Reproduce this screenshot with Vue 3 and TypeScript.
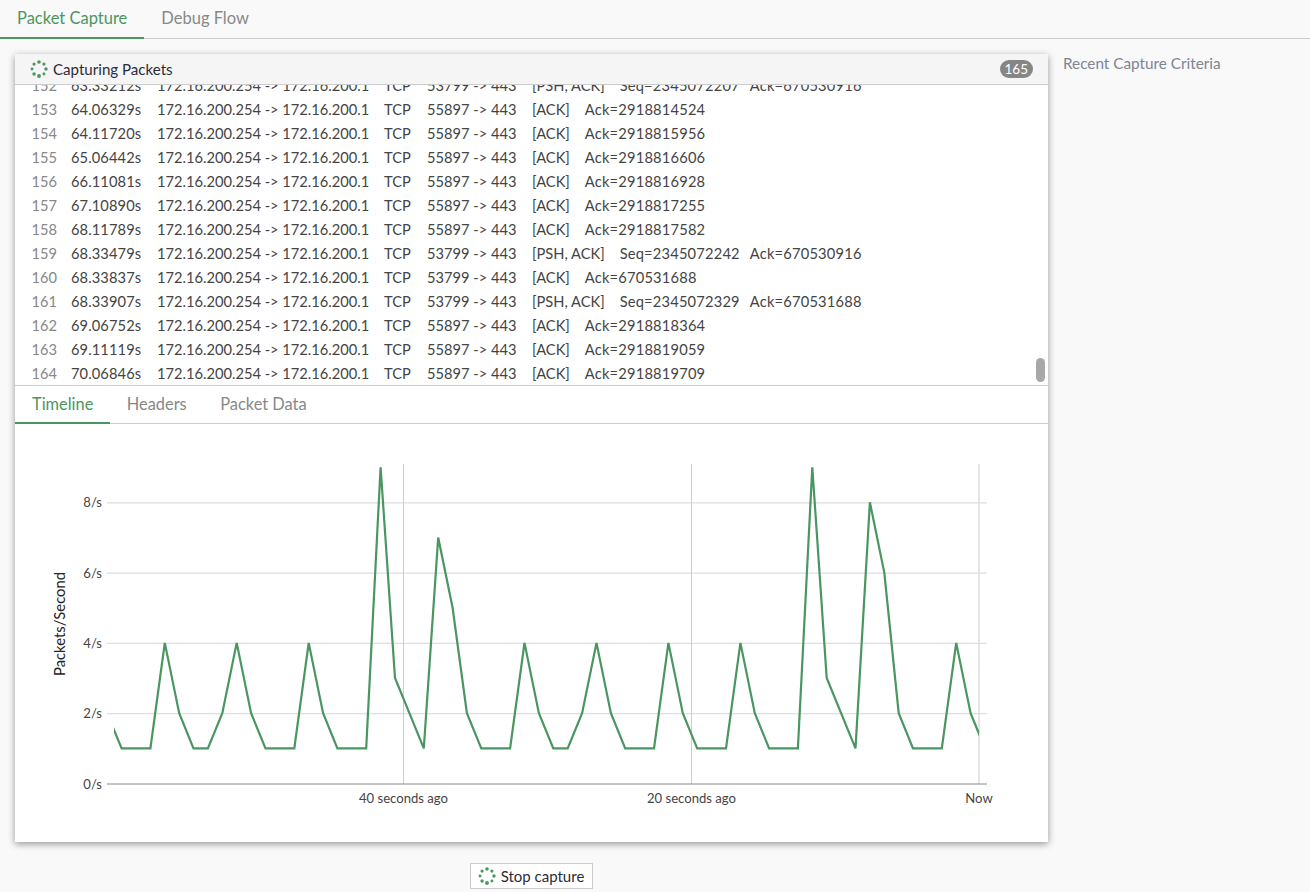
<script setup lang="ts">
interface Row { n: number; t: string; s: number; flags: string; info: string[] }

const rows: Row[] = [
  { n: 152, t: '63.33212s', s: 53799, flags: '[PSH, ACK]', info: ['Seq=2345072207', 'Ack=670530916'] },
  { n: 153, t: '64.06329s', s: 55897, flags: '[ACK]', info: ['Ack=2918814524'] },
  { n: 154, t: '64.11720s', s: 55897, flags: '[ACK]', info: ['Ack=2918815956'] },
  { n: 155, t: '65.06442s', s: 55897, flags: '[ACK]', info: ['Ack=2918816606'] },
  { n: 156, t: '66.11081s', s: 55897, flags: '[ACK]', info: ['Ack=2918816928'] },
  { n: 157, t: '67.10890s', s: 55897, flags: '[ACK]', info: ['Ack=2918817255'] },
  { n: 158, t: '68.11789s', s: 55897, flags: '[ACK]', info: ['Ack=2918817582'] },
  { n: 159, t: '68.33479s', s: 53799, flags: '[PSH, ACK]', info: ['Seq=2345072242', 'Ack=670530916'] },
  { n: 160, t: '68.33837s', s: 53799, flags: '[ACK]', info: ['Ack=670531688'] },
  { n: 161, t: '68.33907s', s: 53799, flags: '[PSH, ACK]', info: ['Seq=2345072329', 'Ack=670531688'] },
  { n: 162, t: '69.06752s', s: 55897, flags: '[ACK]', info: ['Ack=2918818364'] },
  { n: 163, t: '69.11119s', s: 55897, flags: '[ACK]', info: ['Ack=2918819059'] },
  { n: 164, t: '70.06846s', s: 55897, flags: '[ACK]', info: ['Ack=2918819709'] },
]

const values = [2, 1, 1, 1, 4, 2, 1, 1, 2, 4, 2, 1, 1, 1, 4, 2, 1, 1, 1, 9, 3, 2, 1, 7, 5, 2, 1, 1, 1, 4, 2, 1, 1, 2, 4, 2, 1, 1, 1, 4, 2, 1, 1, 1, 4, 2, 1, 1, 1, 9, 3, 2, 1, 8, 6, 2, 1, 1, 1, 4, 2, 1]
const points = values.map((v, i) => `${(107.2 + i * 14.39).toFixed(1)},${(783.5 - v * 35.15).toFixed(1)}`).join(' ')
const ticks = [2, 4, 6, 8].map(v => ({ label: `${v}/s`, y: 784 - v * 35.15 }))
const dots = Array.from({ length: 8 }, (_, i) => {
  const a = (i / 8) * Math.PI * 2 - Math.PI / 2
  return { x: 8 + Math.cos(a) * 6.2, y: 8 + Math.sin(a) * 6.2, r: 1.1 + (i % 4 === 0 ? 0.5 : 0.2) + (i % 3) * 0.12 }
})
</script>

<template>
  <div class="page">
    <nav class="main-tabs">
      <span class="main-tab active">Packet Capture</span>
      <span class="main-tab">Debug Flow</span>
    </nav>
    <div class="body">
      <section class="left">
        <div class="panel">
          <header class="panel-head">
            <svg class="spin" viewBox="0 0 16 16" width="18" height="18">
              <circle v-for="(d, i) in dots" :key="i" :cx="d.x" :cy="d.y" :r="d.r" fill="#4a9660" />
            </svg>
            <span class="title">Capturing Packets</span>
            <span class="count">165</span>
          </header>
          <div class="list">
            <div class="rows">
              <div v-for="r in rows" :key="r.n" class="row">
                <span class="num">{{ r.n }}</span>
                <span class="time">{{ r.t }}</span>
                <span class="addr">172.16.200.254 -&gt; 172.16.200.1</span>
                <span class="proto">TCP</span>
                <span class="ports">{{ r.s }} -&gt; 443</span>
                <span class="flags">{{ r.flags }}</span>
                <span v-for="x in r.info" :key="x" class="info">{{ x }}</span>
              </div>
            </div>
            <div class="thumb"></div>
          </div>
          <div class="sub-tabs">
            <span class="sub-tab active">Timeline</span>
            <span class="sub-tab">Headers</span>
            <span class="sub-tab">Packet Data</span>
          </div>
          <svg class="chart" viewBox="15 424 1033 418" width="1033" height="418">
            <defs>
              <clipPath id="plot"><rect x="114" y="440" width="865" height="350" /></clipPath>
            </defs>
            <line v-for="t in ticks" :key="t.y" x1="107" x2="987" :y1="t.y" :y2="t.y" class="grid" />
            <line x1="403.5" x2="403.5" y1="464" y2="784" class="vline" />
            <line x1="691.5" x2="691.5" y1="464" y2="784" class="vline" />
            <line x1="979" x2="979" y1="464" y2="784" class="vline end" />
            <line x1="107" x2="987" y1="784" y2="784" class="axis" />
            <polyline :points="points" class="trace" clip-path="url(#plot)" />
            <text v-for="t in ticks" :key="t.label" x="102" :y="t.y + 4.5" class="lbl" text-anchor="end">{{ t.label }}</text>
            <text x="102" y="788.5" class="lbl" text-anchor="end">0/s</text>
            <text x="403.5" y="803" class="lbl" text-anchor="middle">40 seconds ago</text>
            <text x="691.5" y="803" class="lbl" text-anchor="middle">20 seconds ago</text>
            <text x="979" y="803" class="lbl" text-anchor="middle">Now</text>
            <text transform="translate(64.5 624) rotate(-90)" class="axis-title" text-anchor="middle">Packets/Second</text>
          </svg>
        </div>
        <div class="actions">
          <button class="stop" type="button">
            <svg class="spin" viewBox="0 0 16 16" width="18" height="18">
              <circle v-for="(d, i) in dots" :key="i" :cx="d.x" :cy="d.y" :r="d.r" fill="#4a9660" />
            </svg>
            <span>Stop capture</span>
          </button>
        </div>
      </section>
      <aside class="side">Recent Capture Criteria</aside>
    </div>
  </div>
</template>

<style>
html, body { margin: 0; background: #f9f9f9; }
</style>

<style scoped>
.page {
  height: 892px;
  overflow: hidden;
  background: #f9f9f9;
  font-family: Lato, "Noto Sans", sans-serif;
  font-size: 14.67px;
  color: #444;
}
.main-tabs {
  display: flex;
  height: 38px;
  border-bottom: 1px solid #ccc;
}
.main-tab {
  padding: 0 17px;
  margin-bottom: -1px;
  font-size: 16.5px;
  line-height: 36px;
  color: #888;
}
.main-tab.active {
  color: #4a9660;
  border-bottom: 2px solid #4a9660;
}
.body {
  display: flex;
  padding: 15px 0 0 15px;
}
.left { width: 1033px; }
.side {
  margin-left: 15px;
  line-height: 18px;
  font-size: 15.3px;
  color: #7d8494;
}
.panel {
  background: #fff;
  box-shadow: 0 2px 7px rgba(0, 0, 0, 0.4);
}
.panel-head {
  display: flex;
  align-items: center;
  height: 30px;
  padding: 0 15px;
  background: #f5f5f5;
  border-bottom: 1px solid #ccc;
}
.spin { flex: none; }
.title { margin-left: 5px; font-size: 15.1px; color: #2c2c38; }
.count {
  margin-left: auto;
  padding: 0 5px;
  height: 18px;
  line-height: 18px;
  border-radius: 9px;
  background: #868686;
  color: #fff;
  font-size: 13.5px;
}
.list {
  position: relative;
  height: 300px;
  overflow: hidden;
  border-bottom: 1px solid #ccc;
}
.rows { margin-top: -12px; }
.row {
  display: flex;
  height: 24px;
  line-height: 26px;
  white-space: nowrap;
}
.num { width: 42px; text-align: right; color: #888; }
.time { margin-left: 14px; width: 86px; letter-spacing: 0.1px; }
.addr { width: 227px; }
.proto { width: 43px; }
.ports { width: 105px; }
.flags { margin-right: 15px; }
.info { margin-right: 10px; letter-spacing: 0.2px; }
.thumb {
  position: absolute;
  right: 3px;
  top: 273px;
  width: 9px;
  height: 24px;
  border-radius: 4.5px;
  background: #a8a8a8;
}
.sub-tabs {
  display: flex;
  height: 37px;
  border-bottom: 1px solid #ccc;
}
.sub-tab {
  padding: 0 16.5px 0 17px;
  font-size: 16.4px;
  line-height: 36px;
  color: #888;
}
.sub-tab.active {
  color: #4a9660;
  border-bottom: 2px solid #4a9660;
  height: 36px;
}
.chart { display: block; }
.grid { stroke: #dedede; stroke-width: 1.2; }
.vline { stroke: #ccc; stroke-width: 1; }
.vline.end { stroke: #ddd; stroke-width: 1.5; }
.axis { stroke: #888; stroke-width: 1; }
.trace { fill: none; stroke: #4a9660; stroke-width: 2.2; stroke-linejoin: miter; }
.lbl { font-family: Lato, sans-serif; font-size: 13.1px; fill: #444; }
.axis-title { font-family: Lato, sans-serif; font-size: 14.8px; fill: #222; }
.actions {
  display: flex;
  justify-content: center;
  margin-top: 21px;
}
.stop {
  display: flex;
  align-items: center;
  height: 26px;
  padding: 0 8px 0 7px;
  background: #fff;
  border: 1px solid #ccc;
  font: inherit;
  font-size: 15px;
  color: #2c2c38;
}
.stop span { margin-left: 5px; }
</style>
